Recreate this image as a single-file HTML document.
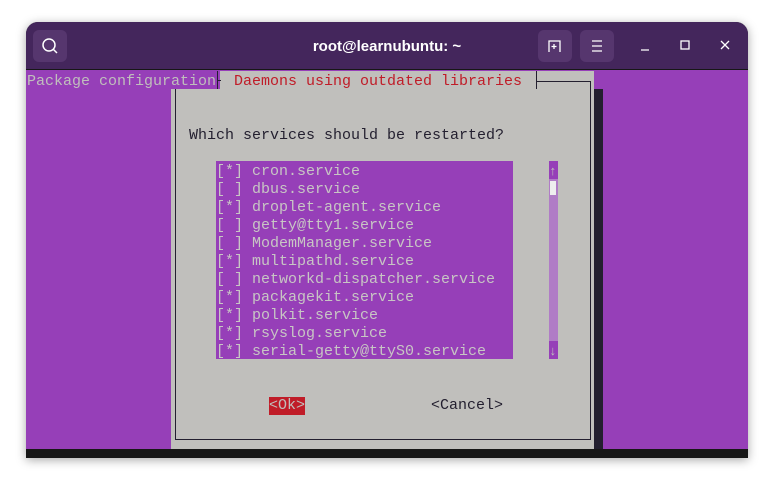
<!DOCTYPE html><html><head><style>
body{margin:0;width:774px;height:487px;background:#fff;position:relative;overflow:hidden;font-family:"Liberation Mono",monospace}
.win{position:absolute;left:26px;top:22px;width:722px;height:436px;border-radius:12px 12px 0 0;background:#171717;overflow:hidden;box-shadow:0 2px 10px rgba(0,0,0,.35)}
.tb{position:absolute;left:0;top:0;width:722px;height:47px;background:#44265c}
.btn{position:absolute;top:8px;width:34px;height:32px;border-radius:6px;background:#56366e}
.title{position:absolute;left:0;width:722px;top:16px;text-align:center;color:#fff;font:bold 15px "Liberation Sans",sans-serif}
.term{position:absolute;left:0;top:48px;width:722px;height:379px;background:#963fb8}
.a{position:absolute}
.t{position:absolute;font-size:15px;line-height:18px;white-space:pre;letter-spacing:0;margin-top:2px}
</style></head><body>
<div class="win">
<div class="tb">
<div class="btn" style="left:7px"><svg width="34" height="32"><circle cx="16" cy="15" r="6" fill="none" stroke="#fff" stroke-width="1.5"/><line x1="20.5" y1="19.5" x2="24" y2="23" stroke="#fff" stroke-width="1.5"/></svg></div>
<div class="title">root@learnubuntu: ~</div>
<div class="btn" style="left:512px"><svg width="34" height="32"><path d="M11 22V11h11v11M13.5 16.5h5M16 14v5" fill="none" stroke="#fff" stroke-width="1.3"/></svg></div>
<div class="btn" style="left:554px"><svg width="34" height="32"><path d="M12 11h10M12 16h10M12 21h10" stroke="#fff" stroke-width="1.3"/></svg></div>
<svg class="a" style="left:610px;top:14px" width="110" height="20"><path d="M5 14h8" stroke="#fff" stroke-width="1.3"/><rect x="45" y="5" width="8" height="8" fill="none" stroke="#fff" stroke-width="1.3"/><path d="M85 5l8 8M93 5l-8 8" stroke="#fff" stroke-width="1.3"/></svg>
</div>
<div class="term">
<div class="a" style="left:145px;top:19px;width:423px;height:360px;background:#c0bfbc"></div>
<div class="a" style="left:194px;top:1px;width:374px;height:18px;background:#c0bfbc"></div>
<div class="a" style="left:568px;top:19px;width:9px;height:360px;background:#231f2f"></div>
<div class="a" style="left:149px;top:19px;width:1px;height:351px;background:#231f2f"></div>
<div class="a" style="left:149px;top:369px;width:415px;height:1px;background:#231f2f"></div>
<div class="a" style="left:564px;top:11px;width:1px;height:359px;background:#231f2f"></div>
<div class="a" style="left:510px;top:11px;width:54px;height:1px;background:#231f2f"></div>
<div class="a" style="left:510px;top:1px;width:1px;height:18px;background:#231f2f"></div>
<div class="a" style="left:191px;top:1px;width:1px;height:18px;background:#231f2f"></div>
<div class="a" style="left:192px;top:10px;width:3px;height:1px;background:#231f2f"></div>
<div class="t" style="left:1px;top:1px;color:#c0bfbc">Package configuration</div>
<div class="t" style="left:199px;top:1px;color:#c01c28"> Daemons using outdated libraries</div>
<div class="t" style="left:163px;top:55px;color:#231f2f">Which services should be restarted?</div>
<div class="a" style="left:190px;top:91px;width:297px;height:198px;background:#963fb8"></div>
<div class="t" style="left:190px;top:91px;color:#c8c6c4">[*] cron.service
[ ] dbus.service
[*] droplet-agent.service
[ ] getty@tty1.service
[ ] ModemManager.service
[*] multipathd.service
[ ] networkd-dispatcher.service
[*] packagekit.service
[*] polkit.service
[*] rsyslog.service
[*] serial-getty@ttyS0.service</div>
<div class="a" style="left:523px;top:91px;width:9px;height:198px;background:#b07cc6"></div>
<div class="a" style="left:523px;top:91px;width:9px;height:18px;background:#963fb8"></div>
<div class="a" style="left:523px;top:271px;width:9px;height:18px;background:#963fb8"></div>
<div class="a" style="left:524px;top:111px;width:6px;height:14px;background:#eee"></div>
<div class="t" style="left:523px;top:91px;color:#c0bfbc;font-size:13px">↑</div>
<div class="t" style="left:523px;top:271px;color:#c0bfbc;font-size:13px">↓</div>
<div class="t" style="left:243px;top:325px;color:#c0bfbc;background:#c01c28">&lt;Ok&gt;</div>
<div class="t" style="left:405px;top:325px;color:#231f2f">&lt;Cancel&gt;</div>
</div>
</div>
</body></html>
